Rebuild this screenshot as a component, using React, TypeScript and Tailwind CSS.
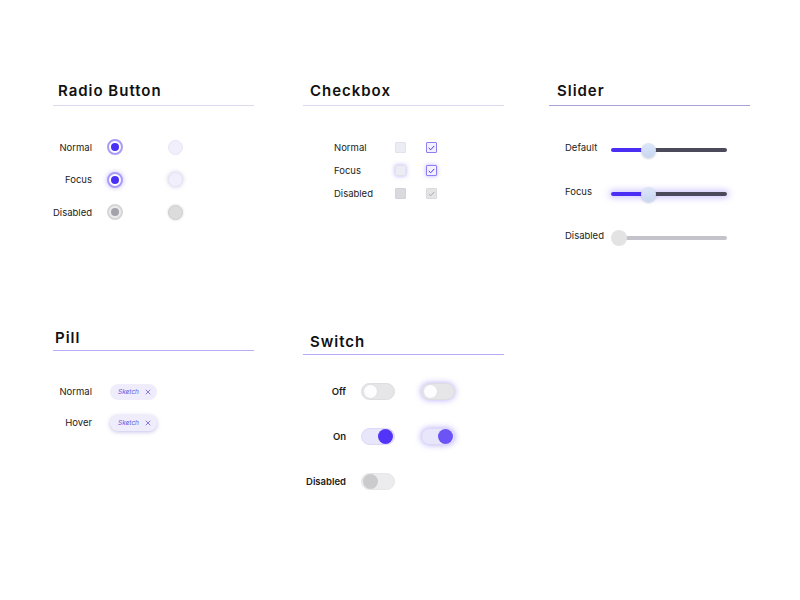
import React from 'react';

const font = { fontFamily: 'Inter, "Noto Sans", sans-serif' };

function Header({ title, pad, line, bottom }: { title: string; pad: string; line: string; bottom: string }) {
  return (
    <div className={`pt-[8px] ${bottom} border-b ${line} ${pad}`}>
      <div className="text-[15px] leading-[16px] font-semibold tracking-[0.065em] text-[#111111]">{title}</div>
    </div>
  );
}

function Radio({ checked, focus, disabled }: { checked?: boolean; focus?: boolean; disabled?: boolean }) {
  if (checked) {
    return (
      <div
        className={`w-[16px] h-[16px] rounded-full flex items-center justify-center border-2 ${
          disabled ? 'border-[#d6d6d8] bg-[#ececee]' : 'border-[#a99cf9] bg-white'
        } ${focus ? 'shadow-[0_0_5px_rgba(120,100,245,0.45)]' : ''}`}
      >
        <div className={`w-[8px] h-[8px] rounded-full ${disabled ? 'bg-[#a4a3ab]' : 'bg-[#4a2ff4]'}`} />
      </div>
    );
  }
  return (
    <div
      className={`w-[15px] h-[15px] rounded-full border ${
        disabled ? 'bg-[#dcdcdc] border-[#cfcfd1]' : 'bg-[#f1effc] border-[#e7e4f6]'
      } ${focus ? 'shadow-[0_0_4px_rgba(110,100,170,0.35)]' : ''} ${disabled ? 'shadow-[0_0_3px_rgba(0,0,0,0.15)]' : ''}`}
    />
  );
}

function Check({ checked, focus, disabled }: { checked?: boolean; focus?: boolean; disabled?: boolean }) {
  const base = disabled
    ? checked
      ? 'bg-[#e4e4e7] border-[#dadade]'
      : 'bg-[#d9d9de] border-[#d2d2d8]'
    : checked
      ? 'bg-[#f3f1ff] border-[#8d7ff3]'
      : 'bg-[#ececf4] border-[#e2e1ee]';
  return (
    <div
      className={`w-[11px] h-[11px] rounded-[1px] border flex items-center justify-center ${base} ${
        focus ? 'shadow-[0_0_4px_rgba(120,100,245,0.5)]' : ''
      }`}
    >
      {checked && (
        <svg width="7" height="6" viewBox="0 0 7 6">
          <path
            d="M1 3.2 L2.7 4.8 L6 1.2"
            fill="none"
            stroke={disabled ? '#a9a9ae' : '#4a32e8'}
            strokeWidth="1"
            strokeLinecap="round"
            strokeLinejoin="round"
          />
        </svg>
      )}
    </div>
  );
}

function Slider({ focus, disabled }: { focus?: boolean; disabled?: boolean }) {
  if (disabled) {
    return (
      <div className="relative w-[116px] h-[16px] flex items-center">
        <div className="ml-[7px] w-[109px] h-[4px] rounded-full bg-[#c4c3cb]" />
        <div className="absolute left-0 top-[0px] w-[16px] h-[16px] rounded-full bg-[#e3e3e4]" />
      </div>
    );
  }
  return (
    <div className="relative w-[116px] h-[16px] flex items-center">
      <div
        className={`w-full h-[4px] rounded-full flex overflow-hidden ${
          focus ? 'shadow-[0_0_6px_2px_rgba(120,100,245,0.35)]' : ''
        }`}
      >
        <div className="w-[37px] h-full bg-[#4a2ef3]" />
        <div className="flex-1 h-full bg-[#4b4a5a]" />
      </div>
      <div className="absolute left-[30px] top-[1px] w-[15px] h-[15px] rounded-full bg-gradient-to-b from-[#dde7f8] to-[#c8d6f0] shadow-[0_1px_2px_rgba(60,70,120,0.25)]" />
    </div>
  );
}

function Pill({ hover }: { hover?: boolean }) {
  return (
    <div
      className={`w-[47px] h-[16px] rounded-full bg-[#efedfc] flex items-center pl-[8px] pr-[6px] justify-between ${
        hover ? 'shadow-[0_1px_4px_rgba(120,110,200,0.45)]' : ''
      }`}
    >
      <span className="text-[6.5px] italic text-[#6a58dc] leading-none">Sketch</span>
      <svg width="6" height="6" viewBox="0 0 6 6">
        <path d="M1 1 L5 5 M5 1 L1 5" stroke="#7b6be0" strokeWidth="0.9" strokeLinecap="round" />
      </svg>
    </div>
  );
}

function Switch({ on, focus, disabled }: { on?: boolean; focus?: boolean; disabled?: boolean }) {
  const track = disabled
    ? 'bg-[#ececee] border-[#e6e6e8]'
    : on
      ? 'bg-[#e8e6fb] border-[#dcd8f7]'
      : 'bg-[#e6e6e9] border-[#dedee2]';
  const knob = disabled
    ? 'bg-[#cbcbcd]'
    : on
      ? focus
        ? 'bg-[#6b53f6]'
        : 'bg-[#5234f8]'
      : 'bg-[#fdfdff] border border-[#dfdfe6]';
  return (
    <div
      className={`w-[34px] h-[17px] rounded-full border flex items-center px-[1px] ${track} ${
        on ? 'justify-end' : 'justify-start'
      } ${focus ? 'shadow-[0_0_6px_rgba(120,100,245,0.55)] border-[#cbc3f6]' : ''}`}
    >
      <div className={`w-[15px] h-[15px] rounded-full ${knob}`} />
    </div>
  );
}

export default function App() {
  return (
    <div className="w-[800px] h-[600px] bg-white text-[#1c1c1c] pt-[75px]" style={font}>
      <div className="flex pl-[53px] h-[247px] items-start">
        {/* radio */}
        <div className="w-[201px]">
          <Header title="Radio Button" pad="pl-[5px]" line="border-[#dcd9f1]" bottom="pb-[6px]" />
          <div className="mt-[33px] flex flex-col gap-[16.5px]">
            {[
              ['Normal', false, false],
              ['Focus', true, false],
              ['Disabled', false, true],
            ].map(([label, focus, disabled]) => (
              <div key={label as string} className="flex items-center h-[16px]">
                <div className="w-[39px] text-right text-[9.5px] pt-[2px]">{label}</div>
                <div className="ml-[15px]">
                  <Radio checked focus={focus as boolean} disabled={disabled as boolean} />
                </div>
                <div className="ml-[45px]">
                  <Radio focus={focus as boolean} disabled={disabled as boolean} />
                </div>
              </div>
            ))}
          </div>
        </div>
        {/* checkbox */}
        <div className="w-[201px] ml-[49px]">
          <Header title="Checkbox" pad="pl-[7px]" line="border-[#dcd9f1]" bottom="pb-[6px]" />
          <div className="mt-[36px] pl-[31px] flex flex-col gap-[12px]">
            {[
              ['Normal', false, false],
              ['Focus', true, false],
              ['Disabled', false, true],
            ].map(([label, focus, disabled]) => (
              <div key={label as string} className="flex items-center h-[11px]">
                <div className="w-[61px] text-[9.5px] pt-[2px]">{label}</div>
                <Check focus={focus as boolean} disabled={disabled as boolean} />
                <div className="ml-[20px]">
                  <Check checked focus={focus as boolean} disabled={disabled as boolean} />
                </div>
              </div>
            ))}
          </div>
        </div>
        {/* slider */}
        <div className="w-[201px] ml-[45px]">
          <Header title="Slider" pad="pl-[8px]" line="border-[#a7a1d6]" bottom="pb-[6px]" />
          <div className="mt-[36px] pl-[16px] flex flex-col gap-[28px]">
            {[
              ['Default', false, false],
              ['Focus', true, false],
              ['Disabled', false, true],
            ].map(([label, focus, disabled]) => (
              <div key={label as string} className="flex items-center h-[16px]">
                <div className="w-[46px] text-[9.5px] pb-[4px]">{label}</div>
                <Slider focus={focus as boolean} disabled={disabled as boolean} />
              </div>
            ))}
          </div>
        </div>
      </div>

      <div className="flex pl-[53px] items-start">
        {/* pill */}
        <div className="w-[201px]">
          <Header title="Pill" pad="pl-[2px]" line="border-[#b8adf8]" bottom="pb-[4px]" />
          <div className="mt-[33px] flex flex-col gap-[15px]">
            {[
              ['Normal', false],
              ['Hover', true],
            ].map(([label, hover]) => (
              <div key={label as string} className="flex items-center h-[16px]">
                <div className="w-[39px] text-right text-[9.5px]">{label}</div>
                <div className="ml-[18px]">
                  <Pill hover={hover as boolean} />
                </div>
              </div>
            ))}
          </div>
        </div>
        {/* switch */}
        <div className="w-[201px] ml-[49px] mt-[4px]">
          <Header title="Switch" pad="pl-[7px]" line="border-[#b5abf5]" bottom="pb-[4px]" />
          <div className="mt-[28px] flex flex-col gap-[28px]">
            <div className="flex items-center h-[17px]">
              <div className="w-[43px] text-right text-[9.5px] font-semibold pt-[1px]">Off</div>
              <div className="ml-[15px]">
                <Switch />
              </div>
              <div className="ml-[26px]">
                <Switch focus />
              </div>
            </div>
            <div className="flex items-center h-[17px]">
              <div className="w-[43px] text-right text-[9.5px] font-semibold pt-[1px]">On</div>
              <div className="ml-[15px]">
                <Switch on />
              </div>
              <div className="ml-[26px]">
                <Switch on focus />
              </div>
            </div>
            <div className="flex items-center h-[17px]">
              <div className="w-[43px] text-right text-[9.5px] font-semibold pt-[1px]">Disabled</div>
              <div className="ml-[15px]">
                <Switch disabled />
              </div>
            </div>
          </div>
        </div>
      </div>
    </div>
  );
}
